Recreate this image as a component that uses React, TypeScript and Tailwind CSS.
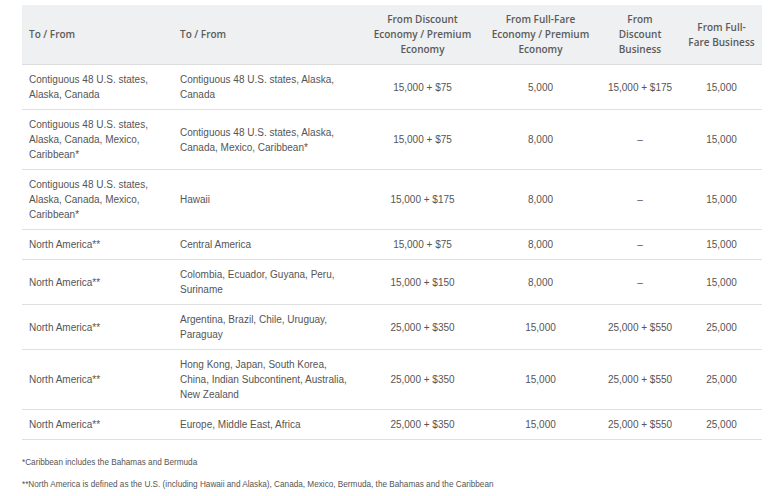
import React from "react";

type Row = {
  from: string;
  to: string;
  discEco: string;
  fullEco: string;
  discBiz: string;
  fullBiz: string;
};

const ROWS: Row[] = [
  {
    from: "Contiguous 48 U.S. states, Alaska, Canada",
    to: "Contiguous 48 U.S. states, Alaska, Canada",
    discEco: "15,000 + $75",
    fullEco: "5,000",
    discBiz: "15,000 + $175",
    fullBiz: "15,000",
  },
  {
    from: "Contiguous 48 U.S. states, Alaska, Canada, Mexico, Caribbean*",
    to: "Contiguous 48 U.S. states, Alaska, Canada, Mexico, Caribbean*",
    discEco: "15,000 + $75",
    fullEco: "8,000",
    discBiz: "–",
    fullBiz: "15,000",
  },
  {
    from: "Contiguous 48 U.S. states, Alaska, Canada, Mexico, Caribbean*",
    to: "Hawaii",
    discEco: "15,000 + $175",
    fullEco: "8,000",
    discBiz: "–",
    fullBiz: "15,000",
  },
  {
    from: "North America**",
    to: "Central America",
    discEco: "15,000 + $75",
    fullEco: "8,000",
    discBiz: "–",
    fullBiz: "15,000",
  },
  {
    from: "North America**",
    to: "Colombia, Ecuador, Guyana, Peru, Suriname",
    discEco: "15,000 + $150",
    fullEco: "8,000",
    discBiz: "–",
    fullBiz: "15,000",
  },
  {
    from: "North America**",
    to: "Argentina, Brazil, Chile, Uruguay, Paraguay",
    discEco: "25,000 + $350",
    fullEco: "15,000",
    discBiz: "25,000 + $550",
    fullBiz: "25,000",
  },
  {
    from: "North America**",
    to: "Hong Kong, Japan, South Korea, China, Indian Subcontinent, Australia, New Zealand",
    discEco: "25,000 + $350",
    fullEco: "15,000",
    discBiz: "25,000 + $550",
    fullBiz: "25,000",
  },
  {
    from: "North America**",
    to: "Europe, Middle East, Africa",
    discEco: "25,000 + $350",
    fullEco: "15,000",
    discBiz: "25,000 + $550",
    fullBiz: "25,000",
  },
];

const TH =
  "py-[7px] align-middle font-semibold text-[10px] leading-[15px] text-[#5b5b5b] border-b border-[#dcdcdc]";
const TD =
  "px-2 py-[7px] align-middle text-[10px] leading-[15px] text-[#555] border-b border-[#e0e0e0]";

export default function App() {
  return (
    <div className="w-[768px] h-[496px] bg-white overflow-hidden pt-[5px] pl-[22px] font-['Liberation_Sans',Arial,sans-serif]">
      <table className="table-fixed border-collapse w-[740px]">
        <colgroup>
          <col className="w-[150px]" />
          <col className="w-[191px]" />
          <col className="w-[119px]" />
          <col className="w-[117px]" />
          <col className="w-[82px]" />
          <col className="w-[81px]" />
        </colgroup>
        <thead className="bg-[#eef0f1] font-['Open_Sans','Noto_Sans',sans-serif]">
          <tr>
            <th className={`${TH} text-left pl-[7px] pr-2`}>To / From</th>
            <th className={`${TH} text-left px-2`}>To / From</th>
            <th className={`${TH} text-center px-2`}>
              From Discount Economy / Premium Economy
            </th>
            <th className={`${TH} text-center px-2`}>
              From Full-Fare Economy / Premium Economy
            </th>
            <th className={`${TH} text-center px-2`}>From Discount Business</th>
            <th className={`${TH} text-center px-[3px]`}>
              From Full-
              <br />
              Fare Business
            </th>
          </tr>
        </thead>
        <tbody>
          {ROWS.map((r, i) => (
            <tr key={i}>
              <td className={`${TD} text-left pl-[7px]`}>{r.from}</td>
              <td className={`${TD} text-left`}>{r.to}</td>
              <td className={`${TD} text-center`}>{r.discEco}</td>
              <td className={`${TD} text-center`}>{r.fullEco}</td>
              <td className={`${TD} text-center`}>{r.discBiz}</td>
              <td className={`${TD} text-center`}>{r.fullBiz}</td>
            </tr>
          ))}
        </tbody>
      </table>

      {/* footnotes */}
      <p className="mt-[18px] text-[8.2px] leading-[10px] text-[#555]">
        *Caribbean includes the Bahamas and Bermuda
      </p>
      <p className="mt-[12px] text-[8.2px] leading-[10px] text-[#555]">
        **North America is defined as the U.S. (including Hawaii and Alaska),
        Canada, Mexico, Bermuda, the Bahamas and the Caribbean
      </p>
    </div>
  );
}
